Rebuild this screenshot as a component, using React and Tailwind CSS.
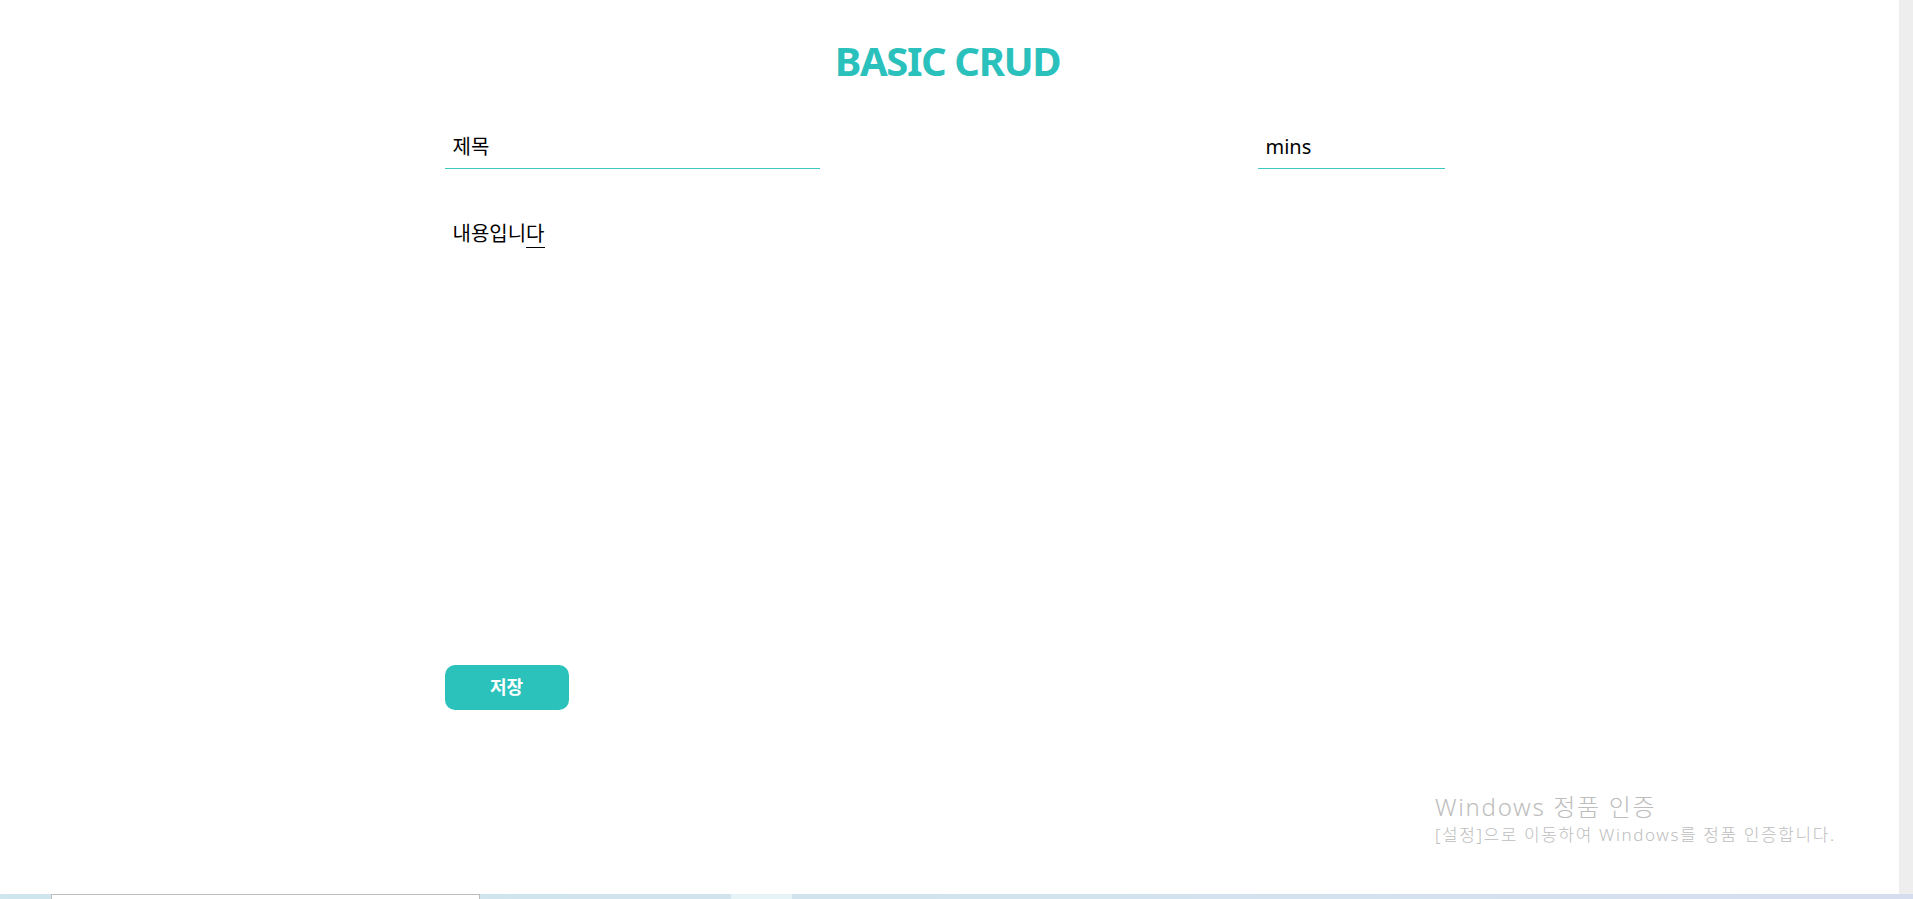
import React, { useState } from "react";

const FONT = "font-['Noto_Sans','Noto_Sans_CJK_KR',sans-serif]";

function Field({ value, width, placeholder }) {
  return (
    <div className={`${width} h-[44px] flex items-center pl-2 border-b border-[#3cc8c2]`}>
      <span className="text-[20px] text-black leading-none">{value || placeholder}</span>
    </div>
  );
}

function Taskbar() {
  return (
    <div className="h-[5px] flex bg-gradient-to-r from-[#cfe6ee] via-[#d2e4ee] to-[#d6ddee]">
      <div className="w-[51px]" />
      <div className="w-[429px] bg-white border-t border-x border-[#bdbdbd]" />
      <div className="w-[251px]" />
      <div className="w-[61px] bg-[#e6f3f7]" />
    </div>
  );
}

export default function App() {
  const [title] = useState("제목");
  const [author] = useState("mins");

  return (
    <div className={`h-[899px] flex flex-col bg-white ${FONT}`}>
      <div className="flex-1 flex relative">
        <div className="flex-1">
          <div className="w-[1010px] mx-auto">
            <h1 className="mt-[37px] pr-1 text-center text-[40px] leading-[48px] font-bold text-[#2ac1bc] tracking-[-1.4px]">
              BASIC CRUD
            </h1>

            <div className="mt-[40px] flex justify-between pr-[10px]">
              <Field value={title} width="w-[375px]" />
              <Field value={author} width="w-[187px]" />
            </div>

            <div className="mt-[40px] h-[420px] pl-2 pt-[11px] text-[20px] leading-[28px] text-black">
              내용입니<span className="border-b border-black">다</span>
            </div>

            <button className="mt-[36px] w-[124px] h-[45px] rounded-[10px] bg-[#2cc2bc] text-white text-[18px] font-bold">
              저장
            </button>
          </div>
        </div>

        <div className="w-[14px] bg-[#eeeeee]" />

        <div className="absolute left-[1435px] top-[792px] text-[#bdbdbd] font-light">
          <div className="text-[24px] leading-[30px] tracking-[1.7px]">Windows 정품 인증</div>
          <div className="mt-[2px] text-[17px] leading-[22px] tracking-[1.6px]">
            [설정]으로 이동하여 Windows를 정품 인증합니다.
          </div>
        </div>
      </div>
      <Taskbar />
    </div>
  );
}
